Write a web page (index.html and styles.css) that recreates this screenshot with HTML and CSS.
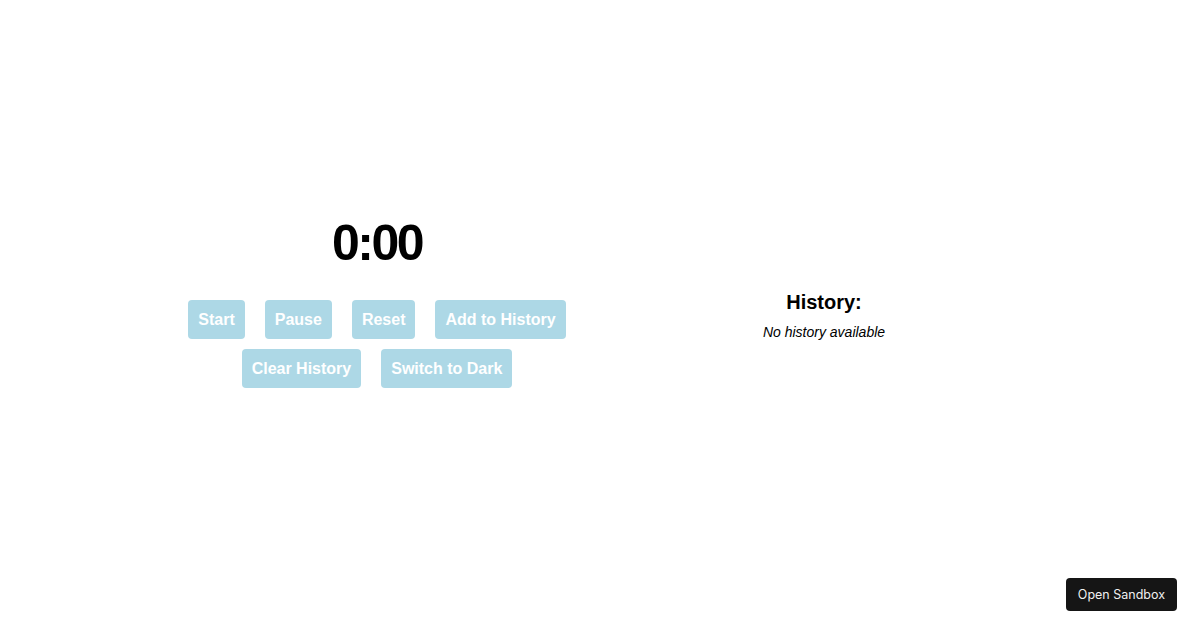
FILE: index.html
```html
<!DOCTYPE html>
<html lang="en">
<head>
    <meta charset="UTF-8">
    <meta name="viewport" content="width=device-width, initial-scale=1.0">
    <title>Stopwatch</title>
    <link rel="stylesheet" href="styles.css">
</head>
<body>
    <div class="app">
        <!-- Cronômetro -->
        <div class="timer">
            <h1 class="time">0:00</h1>
            <div class="controls">
                <button>Start</button>
                <button>Pause</button>
                <button>Reset</button>
                <button>Add to History</button>
                <button>Clear History</button>
                <button>Switch to Dark</button>
            </div>
        </div>

        <!-- Histórico -->
        <div class="history">
            <h2>History:</h2>
            <p class="empty">No history available</p>
        </div>
    </div>

    <a class="sandbox-link" href="#">Open Sandbox</a>
</body>
</html>
```

FILE: styles.css
```css
body {
    font-family: "Liberation Sans", Arial, sans-serif;
    background-color: #fff;
    color: #000;
    margin: 0;
}

.app {
    display: flex;
    align-items: center;
    height: 630px;
    padding-left: 177px;
    box-sizing: border-box;
}

.timer {
    width: 400px;
    text-align: center;
    margin-bottom: 24px;
}

.time {
    font-size: 50px;
    letter-spacing: -2.5px;
    line-height: 58px;
    margin: 0 0 23px;
}

.controls {
    display: flex;
    flex-wrap: wrap;
    justify-content: center;
}

.controls button {
    font-family: "Liberation Sans", Arial, sans-serif;
    font-size: 16px;
    font-weight: bold;
    line-height: 19px;
    padding: 10px;
    margin: 5px 10px;
    background-color: #add8e6;
    color: #fff;
    border: none;
    border-radius: 4px;
    cursor: pointer;
}

.history {
    width: 200px;
    margin-left: 147px;
    text-align: center;
}

.history h2 {
    font-size: 20px;
    margin: 0 0 10px;
}

.empty {
    font-style: italic;
    font-size: 14px;
    margin: 0;
}

.sandbox-link {
    position: fixed;
    right: 23px;
    bottom: 19px;
    background-color: #151515;
    color: #f0f0f0;
    font-family: Inter, "Liberation Sans", sans-serif;
    font-size: 12.5px;
    padding: 9px 12px;
    border-radius: 4px;
    text-decoration: none;
}
```
